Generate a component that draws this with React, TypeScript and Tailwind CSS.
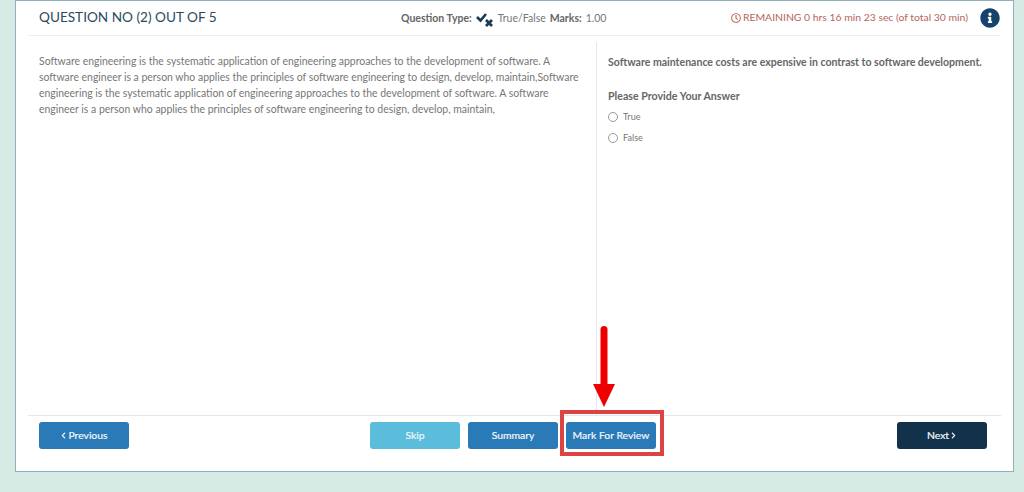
import React from "react";
import { FaInfoCircle, FaRegClock, FaChevronLeft, FaChevronRight } from "react-icons/fa";

const Btn = ({ className = "", children }: { className?: string; children: React.ReactNode }) => (
  <button className={`h-[27px] w-[90px] rounded-[3px] text-[#f2f7fa] text-[10.4px] font-normal [-webkit-text-stroke:0.2px_#f2f7fa] flex items-center justify-center gap-[1px] ${className}`}>
    {children}
  </button>
);

const Radio = ({ label }: { label: string }) => (
  <label className="flex items-center gap-[5px] text-[9.1px] text-[#777] h-[21px]">
    <span className="w-[10px] h-[10px] rounded-full border border-[#999] bg-white" />
    <span>{label}</span>
  </label>
);

export default function App() {
  return (
    <div className="w-[1024px] h-[492px] bg-[#d6ebe3] pl-[15px] overflow-hidden font-['Lato','Noto_Sans',sans-serif]">
      <div className="relative w-[999px] h-[472px] bg-white border border-[#8fb0bc] px-[12px] flex flex-col">
        <header className="h-[35px] shrink-0 border-b border-[#eeeeee] flex items-center relative">
          <h1 className="ml-[11px] text-[13.6px] leading-none text-[#2c4a5e] w-[362px] shrink-0">QUESTION NO (2) OUT OF 5</h1>
          <div className="w-[250px] flex items-center text-[10.5px] leading-[14px] text-[#777]">
            <span className="font-bold text-[#666]">Question Type:</span>
            <svg className="ml-[4px] mr-[3px] mt-[2px]" width="19" height="15" viewBox="0 0 19 15">
              <path d="M1 5l3.500 3.500L10 2" fill="none" stroke="#1d3a52" strokeWidth="2.6" />
              <path d="M10 8l6 6M16 8l-6 6" fill="none" stroke="#1d3a52" strokeWidth="2.8" />
            </svg>
            <span>True/False</span>
            <span className="font-bold text-[#666] ml-[4px]">Marks:</span>
            <span className="ml-[4px]">1.00</span>
          </div>
          <div className="ml-auto flex items-center text-[10.4px] text-[#b5655a] mr-[33px]">
            <FaRegClock className="mr-[2px] w-[10px] h-[10px]" />
            REMAINING 0 hrs 16 min 23 sec (of total 30 min)
          </div>
          <FaInfoCircle className="absolute right-[1px] top-[7px] w-[20px] h-[20px] text-[#16436e]" />
        </header>

        <main className="flex-1 flex min-h-0">
          <section className="w-[568px] pl-[11px] pr-[14px] pt-[17px] text-[10.44px] leading-[16px] text-[#777]">
            Software engineering is the systematic application of engineering approaches to the development of software. A software engineer is a person who applies the principles of software engineering to design, develop, maintain,Software engineering is the systematic application of engineering approaches to the development of software. A software engineer is a person who applies the principles of software engineering to design, develop, maintain,
          </section>
          <section className="mt-[6px] border-l border-[#e6e6e6] pl-[11px] flex-1">
            <p className="mt-[12px] text-[10.55px] leading-[16px] font-bold text-[#666]">
              Software maintenance costs are expensive in contrast to software development.
            </p>
            <p className="mt-[18px] text-[10.65px] leading-[16px] font-bold text-[#666]">Please Provide Your Answer</p>
            <div className="mt-[2px]">
              <Radio label="True" />
              <Radio label="False" />
            </div>
          </section>
        </main>

        <footer className="h-[56px] shrink-0 border-t border-[#e6e6e6] pt-[6px] pl-[11px] flex">
          <Btn className="bg-[#2a7ab8]"><FaChevronLeft className="w-[7px] h-[7px]" />Previous</Btn>
          <div className="ml-[241px] flex gap-[8px]">
            <Btn className="bg-[#5bbcdc]">Skip</Btn>
            <Btn className="bg-[#2a7ab8]">Summary</Btn>
            <Btn className="bg-[#2a7ab8]">Mark For Review</Btn>
          </div>
          <Btn className="bg-[#12324c] ml-[241px]">Next<FaChevronRight className="w-[7px] h-[7px]" /></Btn>
        </footer>

        <div className="absolute left-[544px] top-[409px] w-[104px] h-[46px] border-[4px] border-[#dc4444] pointer-events-none" />
        <svg className="absolute left-[575px] top-[325px] pointer-events-none" width="26" height="82" viewBox="0 0 26 82">
          <path d="M13 3.500v56" stroke="#ee0000" strokeWidth="7" strokeLinecap="round" fill="none" />
          <path d="M2 58h22L13 81z" fill="#ee0000" />
        </svg>
      </div>
    </div>
  );
}
